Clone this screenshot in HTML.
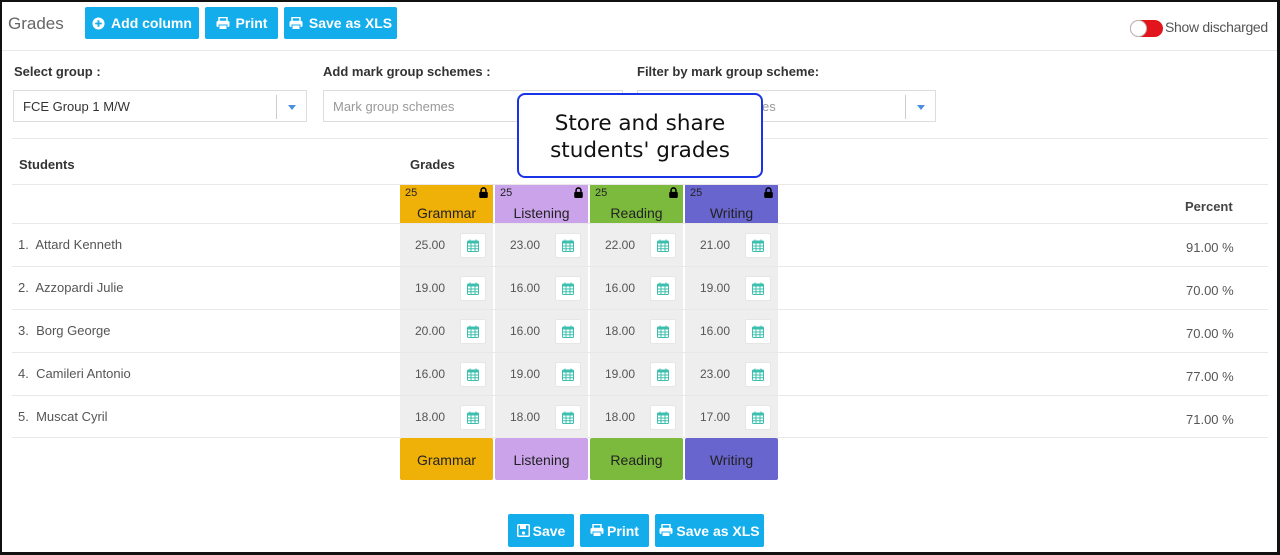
<!DOCTYPE html>
<html><head><style>
*{box-sizing:border-box;margin:0;padding:0}
body{width:1280px;height:555px;background:#fff;font-family:"Liberation Sans",sans-serif;position:relative;overflow:hidden;color:#444}
.frame{position:absolute;left:0;top:0;width:1280px;height:555px;border:2px solid #111;border-right-width:3px;border-bottom-width:3px;pointer-events:none;z-index:5}
.a{position:absolute}
.btn{position:absolute;background:#13adec;color:#fff;font-weight:bold;font-size:14px;border-radius:2px;display:flex;align-items:center;justify-content:center;gap:6px}
.lbl{position:absolute;font-size:13px;font-weight:bold;color:#333}
.sel{position:absolute;height:32px;border:1px solid #ddd;font-size:13px;display:flex;align-items:center;padding-left:9px}
.caret{position:absolute;right:0;top:4px;width:30px;height:24px;border-left:1px solid #ccc}
.caret:after{content:"";position:absolute;left:11px;top:10px;border:4px solid transparent;border-top:5px solid #4a8fe0}
.hl{position:absolute;left:12px;width:1256px;height:1px;background:#e8e8e8}
.col{position:absolute;width:93px}
.head{height:38px;position:relative;font-size:14px;color:#222}
.head .n{position:absolute;left:5px;top:2px;font-size:11px}
.head .t{position:absolute;left:0;right:0;top:20px;text-align:center}
.head .lk{position:absolute;right:4px;top:2px;width:11px;height:11px}
.cell{position:absolute;width:93px;height:42px;background:#eee}
.cell .v{position:absolute;left:15px;top:14px;font-size:12px;color:#555}
.cell .cb{position:absolute;left:60px;top:9px;width:26px;height:25px;background:#fff;border:1px solid #e6e6e6;border-radius:2px}
.foot{position:absolute;width:93px;height:42px;top:438px;font-size:14px;color:#222;text-align:center;line-height:45px;border-radius:2px}
.nm{position:absolute;left:18px;font-size:13px;color:#555}
.pc{position:absolute;left:1186px;font-size:13px;color:#555}
</style></head><body>
<div class="frame"></div>
<div class="a" style="left:8px;top:14px;font-size:17px;color:#666">Grades</div>
<div class="btn" style="left:85px;top:7px;width:114px;height:32px"><svg width="13" height="13" viewBox="0 0 14 14"><circle cx="7" cy="7" r="6.5" fill="#fff"/><path d="M7 3.5v7M3.5 7h7" stroke="#13adec" stroke-width="2"/></svg>Add column</div>
<div class="btn" style="left:205px;top:7px;width:73px;height:32px"><svg width="14" height="13" viewBox="0 0 14 13"><rect x="3" y="0.5" width="8" height="4" fill="none" stroke="#fff" stroke-width="1.5"/><rect x="0.5" y="4" width="13" height="6" rx="1.5" fill="#fff"/><rect x="3" y="8" width="8" height="4.5" fill="#fff" stroke="#13adec"/></svg>Print</div>
<div class="btn" style="left:284px;top:7px;width:113px;height:32px"><svg width="14" height="13" viewBox="0 0 14 13"><rect x="3" y="0.5" width="8" height="4" fill="none" stroke="#fff" stroke-width="1.5"/><rect x="0.5" y="4" width="13" height="6" rx="1.5" fill="#fff"/><rect x="3" y="8" width="8" height="4.5" fill="#fff" stroke="#13adec"/></svg>Save as XLS</div>
<div class="a" style="left:1130px;top:20px;width:33px;height:17px;border-radius:9px;background:#e3151c"></div>
<div class="a" style="left:1130px;top:20px;width:17px;height:17px;border-radius:50%;background:#fff;border:1px solid #bbb"></div>
<div class="a" style="left:1165px;top:19px;font-size:14px;color:#555;letter-spacing:-0.3px">Show discharged</div>
<div class="hl" style="top:50px;left:2px;width:1276px"></div>
<div class="lbl" style="left:14px;top:64px">Select group :</div>
<div class="lbl" style="left:323px;top:64px">Add mark group schemes :</div>
<div class="lbl" style="left:637px;top:64px">Filter by mark group scheme:</div>
<div class="sel" style="left:13px;top:90px;width:294px;color:#333">FCE Group 1 M/W<div class="caret"></div></div>
<div class="sel" style="left:323px;top:90px;width:300px;color:#999">Mark group schemes</div>
<div class="sel" style="left:637px;top:90px;width:299px;color:#999"><span style="margin-left:115px">es</span><div class="caret"></div></div>
<div class="hl" style="top:138px"></div>
<div class="lbl" style="left:19px;top:157px">Students</div>
<div class="lbl" style="left:410px;top:157px">Grades</div>
<div class="hl" style="top:184px"></div>
<div class="a" style="left:517px;top:93px;width:246px;height:85px;border:2.5px solid #1b33e6;border-radius:8px;background:#fff;font-family:'DejaVu Sans',sans-serif;font-size:21.5px;color:#111;text-align:center;line-height:27px;padding-top:15px;z-index:3">Store and share<br>students' grades</div>
<div class="lbl" style="left:1185px;top:199px;color:#444">Percent</div>
<div class="hl" style="top:223px"></div><div class="hl" style="top:266px"></div><div class="hl" style="top:309px"></div><div class="hl" style="top:352px"></div><div class="hl" style="top:395px"></div><div class="hl" style="top:437px"></div>

<div class="col" style="left:400px;top:185px"><div class="head" style="background:#efb007"><span class="n">25</span><svg class="lk" viewBox="0 0 9 9"><path d="M2.5 4V2.8a2 2 0 0 1 4 0V4" fill="none" stroke="#000" stroke-width="1.3"/><rect x="1" y="4" width="7" height="5" rx="1"/></svg><span class="t">Grammar</span></div></div>
<div class="col" style="left:495px;top:185px"><div class="head" style="background:#cba3ea"><span class="n">25</span><svg class="lk" viewBox="0 0 9 9"><path d="M2.5 4V2.8a2 2 0 0 1 4 0V4" fill="none" stroke="#000" stroke-width="1.3"/><rect x="1" y="4" width="7" height="5" rx="1"/></svg><span class="t">Listening</span></div></div>
<div class="col" style="left:590px;top:185px"><div class="head" style="background:#7cba3d"><span class="n">25</span><svg class="lk" viewBox="0 0 9 9"><path d="M2.5 4V2.8a2 2 0 0 1 4 0V4" fill="none" stroke="#000" stroke-width="1.3"/><rect x="1" y="4" width="7" height="5" rx="1"/></svg><span class="t">Reading</span></div></div>
<div class="col" style="left:685px;top:185px"><div class="head" style="background:#6865cf"><span class="n">25</span><svg class="lk" viewBox="0 0 9 9"><path d="M2.5 4V2.8a2 2 0 0 1 4 0V4" fill="none" stroke="#000" stroke-width="1.3"/><rect x="1" y="4" width="7" height="5" rx="1"/></svg><span class="t">Writing</span></div></div>

<div id="cells"></div>
<script>
var names=["Attard Kenneth","Azzopardi Julie","Borg George","Camileri Antonio","Muscat Cyril"];
var vals=[["25.00","23.00","22.00","21.00"],["19.00","16.00","16.00","19.00"],["20.00","16.00","18.00","16.00"],["16.00","19.00","19.00","23.00"],["18.00","18.00","18.00","17.00"]];
var pcs=["91.00 %","70.00 %","70.00 %","77.00 %","71.00 %"];
var xs=[400,495,590,685],h="";
var cal='<svg width="12" height="13" viewBox="0 0 12 13" style="position:absolute;left:6px;top:5px"><rect x="0.5" y="2" width="11" height="10.5" rx="1" fill="none" stroke="#3cbfae"/><rect x="0.5" y="2" width="11" height="2.5" fill="#3cbfae"/><path d="M3 0.5v3M9 0.5v3M1 7h10M1 9.8h10M4 4.5v8M8 4.5v8" stroke="#3cbfae" stroke-width="1"/></svg>';
for(var r=0;r<5;r++){var y=224+r*43;
h+='<div class="nm" style="top:'+(y+13)+'px">'+(r+1)+'.&nbsp; '+names[r]+'</div>';
h+='<div class="pc" style="top:'+(y+16)+'px">'+pcs[r]+'</div>';
for(var c=0;c<4;c++)h+='<div class="cell" style="left:'+xs[c]+'px;top:'+y+'px"><span class="v">'+vals[r][c]+'</span><div class="cb">'+cal+'</div></div>';}
document.getElementById("cells").innerHTML=h;
</script>
<div class="foot" style="left:400px;background:#efb007">Grammar</div>
<div class="foot" style="left:495px;background:#cba3ea">Listening</div>
<div class="foot" style="left:590px;background:#7cba3d">Reading</div>
<div class="foot" style="left:685px;background:#6865cf">Writing</div>

<div class="btn" style="left:508px;top:514px;width:66px;height:33px;gap:3px"><svg width="13" height="13" viewBox="0 0 13 13"><rect x="0.75" y="0.75" width="11.5" height="11.5" rx="1" fill="none" stroke="#fff" stroke-width="1.5"/><rect x="3" y="1" width="6" height="4" fill="#fff"/><circle cx="6.5" cy="9" r="1.6" fill="#fff"/></svg>Save</div>
<div class="btn" style="left:580px;top:514px;width:69px;height:33px;gap:3px"><svg width="14" height="13" viewBox="0 0 14 13"><rect x="3" y="0.5" width="8" height="4" fill="none" stroke="#fff" stroke-width="1.5"/><rect x="0.5" y="4" width="13" height="6" rx="1.5" fill="#fff"/><rect x="3" y="8" width="8" height="4.5" fill="#fff" stroke="#13adec"/></svg>Print</div>
<div class="btn" style="left:655px;top:514px;width:109px;height:33px;gap:3px"><svg width="14" height="13" viewBox="0 0 14 13"><rect x="3" y="0.5" width="8" height="4" fill="none" stroke="#fff" stroke-width="1.5"/><rect x="0.5" y="4" width="13" height="6" rx="1.5" fill="#fff"/><rect x="3" y="8" width="8" height="4.5" fill="#fff" stroke="#13adec"/></svg>Save as XLS</div>
</body></html>
